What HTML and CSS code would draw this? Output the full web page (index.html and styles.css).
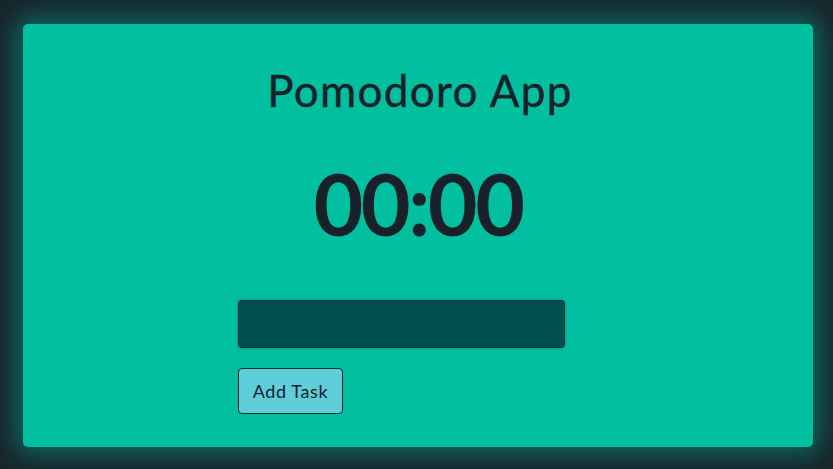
FILE: index.html
```html
<!DOCTYPE html>
<html>
<head>
<meta charset="utf-8">
<link rel="stylesheet" href="styles.css">
</head>
<body>
<main class="card">
  <h1 class="title">Pomodoro App</h1>
  <div class="timer">00:00</div>
  <form class="task-form">
    <input class="task-input" type="text">
    <button class="add-btn" type="button">Add Task</button>
  </form>
</main>
</body>
</html>
```
FILE: styles.css
```css
html, body { margin: 0; height: 100%; }
body {
  background: #17252c;
  padding: 24px 20px 22px 23px;
  box-sizing: border-box;
  font-family: Lato, "Noto Sans", sans-serif;
  color: #18202a;
}
.card {
  box-sizing: border-box;
  height: 423px;
  background: #02c09f;
  border-radius: 5px;
  box-shadow: 0 0 26px 7px rgba(2, 192, 159, 0.45);
  display: flex;
  flex-direction: column;
  align-items: center;
  padding-top: 36px;
}
.title {
  margin: 0;
  font-weight: 400;
  font-size: 44px;
  line-height: 60px;
  letter-spacing: 1.3px;
  padding-left: 4px;
  -webkit-text-stroke: 0.4px #18202a;
}
.timer {
  margin-top: 33px;
  font-weight: 700;
  font-size: 86px;
  line-height: 100px;
  letter-spacing: -2.5px;
}
.task-form {
  width: 360px;
  margin-top: 47px;
  display: flex;
  flex-direction: column;
  align-items: flex-start;
  gap: 20px;
}
.task-input {
  box-sizing: border-box;
  width: 327px;
  height: 48px;
  background: #024f50;
  border: 1px solid #17313a;
  border-radius: 4px;
  box-shadow: 0 0 3px rgba(0, 0, 0, 0.35);
  outline: none;
}
.add-btn {
  box-sizing: border-box;
  width: 105px;
  height: 46px;
  background: #5ecfd9;
  border: 1px solid #17252c;
  border-radius: 4px;
  font-family: Lato, "Noto Sans", sans-serif;
  font-size: 18px;
  letter-spacing: 0.6px;
  color: #18202a;
  padding: 0;
}
```
